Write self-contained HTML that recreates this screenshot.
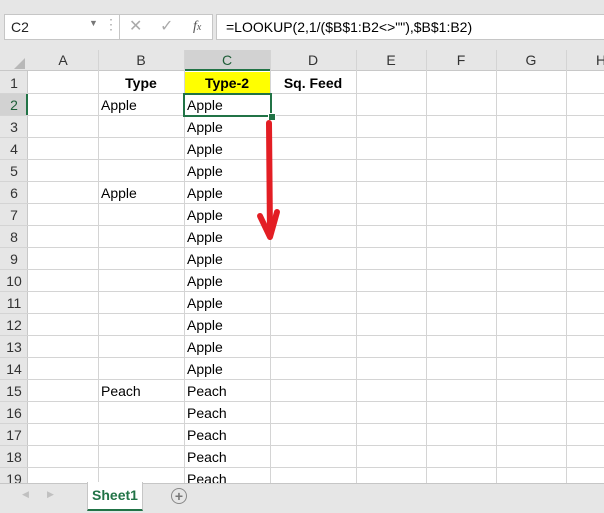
<!DOCTYPE html><html><head><style>
body{margin:0;width:604px;height:513px;overflow:hidden;background:#fff;font-family:"Liberation Sans",Arial,sans-serif;position:relative}
.a{position:absolute}
.t{font-size:14px;color:#000;line-height:22px}
.rh{width:28px;text-align:center;font-size:14px;color:#333;line-height:22px;left:0}
.ch{top:50px;height:21px;line-height:21px;text-align:center;font-size:14px;color:#333}
</style></head><body>
<div class="a" style="left:0;top:0;width:604px;height:50px;background:#e6e6e6"></div>
<div class="a" style="left:4px;top:14px;width:128px;height:26px;background:#fff;border:1px solid #c6c6c6;box-sizing:border-box"></div>
<div class="a" style="left:11px;top:14px;line-height:26px;font-size:14px;color:#222">C2</div>
<div class="a" style="left:89px;top:18px;font-size:9px;color:#777">▼</div>
<div class="a" style="left:104px;top:16px;font-size:14px;color:#aaa">⋮</div>
<div class="a" style="left:119px;top:14px;width:94px;height:26px;background:#fff;border:1px solid #c6c6c6;box-sizing:border-box"></div>
<div class="a" style="left:129px;top:16px;font-size:16px;color:#aaa;line-height:22px">✕</div>
<div class="a" style="left:160px;top:16px;font-size:16px;color:#aaa;line-height:22px">✓</div>
<div class="a" style="left:193px;top:16px;font-size:14px;color:#555;font-style:italic;font-family:'Liberation Serif',serif;line-height:22px">f<span style="font-size:10px">x</span></div>
<div class="a" style="left:216px;top:14px;width:400px;height:26px;background:#fff;border:1px solid #c6c6c6;box-sizing:border-box"></div>
<div class="a" style="left:226px;top:14px;line-height:26px;font-size:14px;color:#000">=LOOKUP(2,1/($B$1:B2&lt;&gt;""),$B$1:B2)</div>
<div class="a" style="left:0;top:50px;width:604px;height:21px;background:#e6e6e6;border-bottom:1px solid #c8c8c8;box-sizing:border-box"></div>
<div class="a" style="left:0;top:71px;width:28px;height:412px;background:#e6e6e6;border-right:1px solid #c8c8c8;box-sizing:border-box"></div>
<div class="a" style="left:184px;top:50px;width:86px;height:21px;background:#d2d2d2;border-bottom:2px solid #217346;box-sizing:border-box"></div>
<div class="a" style="left:0;top:94px;width:28px;height:22px;background:#d2d2d2;border-right:2px solid #217346;box-sizing:border-box"></div>
<svg class="a" style="left:0;top:50px" width="604" height="433">
<polygon points="14,19 25,19 25,8" fill="#b8b8b8"/>
<g stroke="#d4d4d4" stroke-width="1">
<line x1="98.5" y1="0" x2="98.5" y2="433"/><line x1="184.5" y1="0" x2="184.5" y2="433"/><line x1="270.5" y1="0" x2="270.5" y2="433"/><line x1="356.5" y1="0" x2="356.5" y2="433"/><line x1="426.5" y1="0" x2="426.5" y2="433"/><line x1="496.5" y1="0" x2="496.5" y2="433"/><line x1="566.5" y1="0" x2="566.5" y2="433"/>
</g>
<g stroke="#d4d4d4">
<line x1="0" y1="43.5" x2="604" y2="43.5"/><line x1="0" y1="65.5" x2="604" y2="65.5"/><line x1="0" y1="87.5" x2="604" y2="87.5"/><line x1="0" y1="109.5" x2="604" y2="109.5"/><line x1="0" y1="131.5" x2="604" y2="131.5"/><line x1="0" y1="153.5" x2="604" y2="153.5"/><line x1="0" y1="175.5" x2="604" y2="175.5"/><line x1="0" y1="197.5" x2="604" y2="197.5"/><line x1="0" y1="219.5" x2="604" y2="219.5"/><line x1="0" y1="241.5" x2="604" y2="241.5"/><line x1="0" y1="263.5" x2="604" y2="263.5"/><line x1="0" y1="285.5" x2="604" y2="285.5"/><line x1="0" y1="307.5" x2="604" y2="307.5"/><line x1="0" y1="329.5" x2="604" y2="329.5"/><line x1="0" y1="351.5" x2="604" y2="351.5"/><line x1="0" y1="373.5" x2="604" y2="373.5"/><line x1="0" y1="395.5" x2="604" y2="395.5"/><line x1="0" y1="417.5" x2="604" y2="417.5"/>
</g></svg>
<div class="a ch" style="left:28px;width:70px">A</div><div class="a ch" style="left:98px;width:86px">B</div><div class="a ch" style="left:184px;width:86px;color:#1e5e38">C</div><div class="a ch" style="left:270px;width:86px">D</div><div class="a ch" style="left:356px;width:70px">E</div><div class="a ch" style="left:426px;width:70px">F</div><div class="a ch" style="left:496px;width:70px">G</div><div class="a ch" style="left:566px;width:70px">H</div>
<div class="a" style="left:185px;top:72px;width:85px;height:21px;background:#ffff00"></div>
<div class="a t" style="left:98px;top:72px;width:86px;text-align:center;font-weight:bold">Type</div>
<div class="a t" style="left:184px;top:72px;width:86px;text-align:center;font-weight:bold">Type-2</div>
<div class="a t" style="left:270px;top:72px;width:86px;text-align:center;font-weight:bold">Sq. Feed</div>
<div class="a rh" style="top:72px">1</div><div class="a rh" style="top:94px;color:#1e5e38">2</div><div class="a rh" style="top:116px">3</div><div class="a rh" style="top:138px">4</div><div class="a rh" style="top:160px">5</div><div class="a rh" style="top:182px">6</div><div class="a rh" style="top:204px">7</div><div class="a rh" style="top:226px">8</div><div class="a rh" style="top:248px">9</div><div class="a rh" style="top:270px">10</div><div class="a rh" style="top:292px">11</div><div class="a rh" style="top:314px">12</div><div class="a rh" style="top:336px">13</div><div class="a rh" style="top:358px">14</div><div class="a rh" style="top:380px">15</div><div class="a rh" style="top:402px">16</div><div class="a rh" style="top:424px">17</div><div class="a rh" style="top:446px">18</div><div class="a rh" style="top:468px">19</div>
<div class="a t" style="left:101px;top:94px">Apple</div><div class="a t" style="left:101px;top:182px">Apple</div><div class="a t" style="left:101px;top:380px">Peach</div>
<div class="a t" style="left:187px;top:94px">Apple</div><div class="a t" style="left:187px;top:116px">Apple</div><div class="a t" style="left:187px;top:138px">Apple</div><div class="a t" style="left:187px;top:160px">Apple</div><div class="a t" style="left:187px;top:182px">Apple</div><div class="a t" style="left:187px;top:204px">Apple</div><div class="a t" style="left:187px;top:226px">Apple</div><div class="a t" style="left:187px;top:248px">Apple</div><div class="a t" style="left:187px;top:270px">Apple</div><div class="a t" style="left:187px;top:292px">Apple</div><div class="a t" style="left:187px;top:314px">Apple</div><div class="a t" style="left:187px;top:336px">Apple</div><div class="a t" style="left:187px;top:358px">Apple</div><div class="a t" style="left:187px;top:380px">Peach</div><div class="a t" style="left:187px;top:402px">Peach</div><div class="a t" style="left:187px;top:424px">Peach</div><div class="a t" style="left:187px;top:446px">Peach</div><div class="a t" style="left:187px;top:468px">Peach</div>
<div class="a" style="left:183px;top:93px;width:89px;height:24px;border:2px solid #217346;box-sizing:border-box"></div>
<div class="a" style="left:268px;top:113px;width:6px;height:6px;background:#217346;border:1px solid #fff"></div>
<svg class="a" style="left:0;top:0" width="604" height="513"><g stroke="#e31e24" stroke-width="6" stroke-linecap="round" stroke-linejoin="round" fill="none"><path d="M269,123 L270,236"/><path d="M260,216 L270,237 L277,212"/></g></svg>
<div class="a" style="left:0;top:483px;width:604px;height:30px;background:#e6e6e6;border-top:1px solid #c6c6c6;box-sizing:border-box"></div>
<div class="a" style="left:22px;top:489px;font-size:9px;color:#c0c0c0">◀</div>
<div class="a" style="left:47px;top:489px;font-size:9px;color:#c0c0c0">▶</div>
<div class="a" style="left:87px;top:482px;width:56px;height:29px;background:#fff;border-left:1px solid #c6c6c6;border-right:1px solid #c6c6c6;border-bottom:2px solid #217346;box-sizing:border-box;text-align:center;line-height:27px;font-size:14px;font-weight:bold;color:#217346">Sheet1</div>
<div class="a" style="left:171px;top:488px;width:14px;height:14px;border:1.5px solid #888;border-radius:50%;text-align:center;line-height:14px;font-size:14px;color:#777;font-weight:bold">+</div>
</body></html>
